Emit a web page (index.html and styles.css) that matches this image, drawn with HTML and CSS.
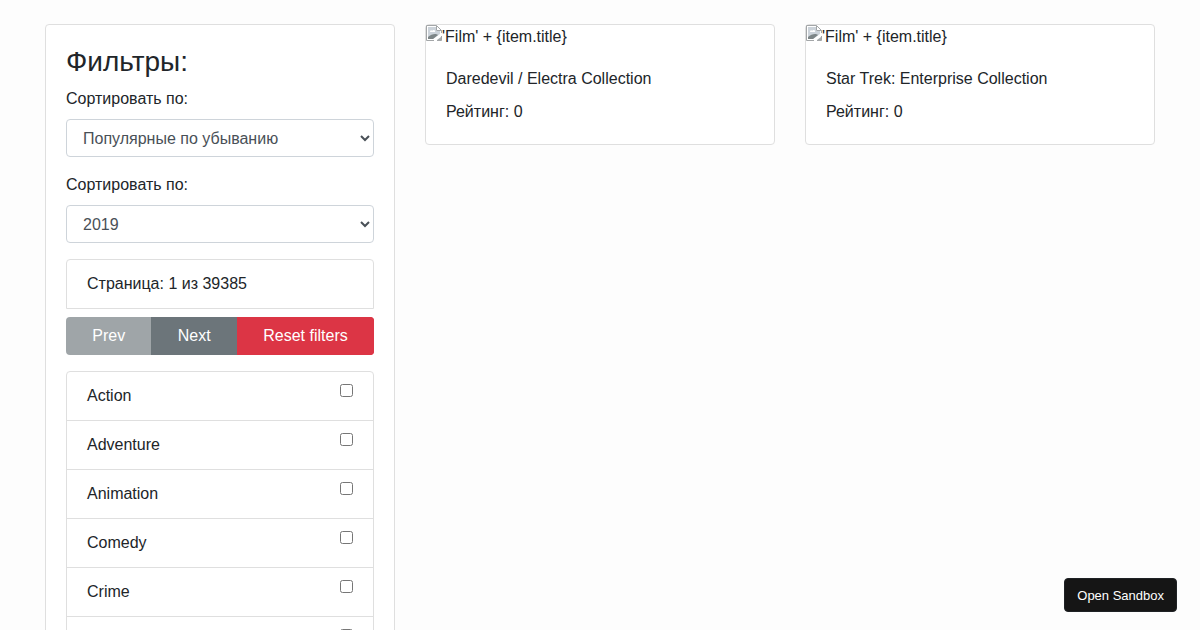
FILE: index.html
```html
<!DOCTYPE html>
<html lang="ru">
<head>
    <meta charset="UTF-8">
    <meta name="viewport" content="width=device-width, initial-scale=1.0">
    <title>Фильмы</title>
    <link rel="stylesheet" href="styles.css">
</head>
<body>
    <!-- Broken image icon shared by the film cards -->
    <svg class="sprite" aria-hidden="true">
        <symbol id="no-image" viewBox="0 0 16 16">
            <path fill="#fff" d="M0 0h11l5 5v4l-8 7H0z"/>
            <path fill="#ccd3da" d="M2 2h8v4h4v3l-7 5H2z"/>
            <path fill="#fff" d="M4 7c0-2 2-2 2-1 1-2 4-1 3 1z"/>
            <path fill="#7d8587" d="M2 12c2-2 5-3 7-3 1 0 2 0 3 1l-5 4H2z"/>
            <path fill="#fff" d="M16 8v2l-6 6H7z"/>
            <path fill="#a5abad" d="M15 12v3h-4z"/>
            <path fill="none" stroke="#a3a6a8" d="M8 15.5H.5V.5h10l5 5V8M10.500 .5v5h5M15.500 11v4.500H11"/>
        </symbol>
    </svg>

    <div class="container">
        <div class="row">
            <!-- Filters -->
            <aside class="card card-body">
                <h3>Фильтры:</h3>
                <form>
                    <div class="form-group">
                        <label for="sort_by">Сортировать по:</label>
                        <select class="form-control" id="sort_by">
                            <option>Популярные по убыванию</option>
                        </select>
                    </div>
                    <div class="form-group">
                        <label for="year">Сортировать по:</label>
                        <select class="form-control" id="year">
                            <option>2019</option>
                        </select>
                    </div>

                    <div class="page-info">Страница: 1 из 39385</div>
                    <div class="btn-group">
                        <button type="button" class="btn btn-secondary" disabled>Prev</button>
                        <button type="button" class="btn btn-secondary">Next</button>
                        <button type="reset" class="btn btn-danger">Reset filters</button>
                    </div>

                    <ul class="genres">
                        <li><label for="action">Action</label><input type="checkbox" id="action"></li>
                        <li><label for="adventure">Adventure</label><input type="checkbox" id="adventure"></li>
                        <li><label for="animation">Animation</label><input type="checkbox" id="animation"></li>
                        <li><label for="comedy">Comedy</label><input type="checkbox" id="comedy"></li>
                        <li><label for="crime">Crime</label><input type="checkbox" id="crime"></li>
                        <li><label for="documentary">Documentary</label><input type="checkbox" id="documentary"></li>
                    </ul>
                </form>
            </aside>

            <!-- Films -->
            <article class="card">
                <div class="card-img">
                    <svg class="icon" aria-hidden="true"><use href="#no-image"/></svg>
                    <span>'Film' + {item.title}</span>
                </div>
                <div class="card-body">
                    <h6 class="card-title">Daredevil / Electra Collection</h6>
                    <div class="card-text">Рейтинг: 0</div>
                </div>
            </article>
            <article class="card">
                <div class="card-img">
                    <svg class="icon" aria-hidden="true"><use href="#no-image"/></svg>
                    <span>'Film' + {item.title}</span>
                </div>
                <div class="card-body">
                    <h6 class="card-title">Star Trek: Enterprise Collection</h6>
                    <div class="card-text">Рейтинг: 0</div>
                </div>
            </article>
        </div>
    </div>

    <button type="button" class="open-sandbox">Open Sandbox</button>
</body>
</html>
```
FILE: styles.css
```css
*, *::before, *::after {
    box-sizing: border-box;
}
body {
    margin: 0;
    font-family: "Helvetica Neue", "Liberation Sans", Arial, sans-serif;
    font-size: 16px;
    line-height: 24px;
    color: #212529;
    background-color: #fdfdfd;
}
h3, h6 {
    margin: 0;
    font-weight: 400;
}
h3 {
    margin-bottom: 8px;
    font-size: 28px;
    line-height: 34px;
}
button, input, select {
    margin: 0;
    font-family: inherit;
}
.sprite {
    display: none;
}
.container {
    max-width: 1140px;
    margin: 0 auto;
    padding: 24px 15px 0;
}
.row {
    display: grid;
    grid-template-columns: repeat(3, 1fr);
    column-gap: 30px;
    align-items: start;
}

/* Cards */
.card {
    background-color: #fff;
    border: 1px solid #dfdfdf;
    border-radius: 4px;
}
.card-body {
    padding: 20px;
}
.card-img {
    display: flex;
}
.icon {
    width: 16px;
    height: 16px;
}
.card-title {
    margin-bottom: 12px;
    font-size: 16px;
    line-height: 19px;
}

/* Filters */
.form-group {
    margin-bottom: 16px;
}
.form-group label {
    display: block;
    margin-bottom: 8px;
}
.form-control {
    display: block;
    width: 100%;
    height: 38px;
    padding: 6px 12px;
    font-size: 16px;
    line-height: 24px;
    color: #495057;
    background-color: #fff;
    border: 1px solid #ced4da;
    border-radius: 4px;
}
.page-info {
    margin-bottom: 8px;
    padding: 12px 20px;
    border: 1px solid #dfdfdf;
    border-radius: 4px 4px 0 0;
}
.btn-group {
    display: flex;
    margin-bottom: 16px;
    border-radius: 4px;
    overflow: hidden;
}
.btn {
    flex: 1 1 auto;
    height: 38px;
    padding: 6px 12px;
    font-size: 16px;
    line-height: 24px;
    color: #fff;
    border: 1px solid transparent;
    cursor: pointer;
}
.btn-secondary {
    background-color: #6c757a;
    border-color: #6c757a;
}
.btn-danger {
    background-color: #dc3545;
    border-color: #dc3545;
}
.btn:disabled {
    opacity: 0.65;
    cursor: default;
}
.genres {
    margin: 0;
    padding: 0;
    list-style: none;
    border: 1px solid #dfdfdf;
    border-radius: 4px;
}
.genres li {
    display: flex;
    justify-content: space-between;
    align-items: flex-start;
    padding: 12px 20px;
}
.genres li + li {
    border-top: 1px solid #dfdfdf;
}

.open-sandbox {
    position: fixed;
    right: 23px;
    bottom: 18px;
    height: 34px;
    padding: 0 12px;
    font-size: 13px;
    color: #fff;
    background-color: #151515;
    border: 1px solid #1f2225;
    border-radius: 4px;
    cursor: pointer;
}
```
